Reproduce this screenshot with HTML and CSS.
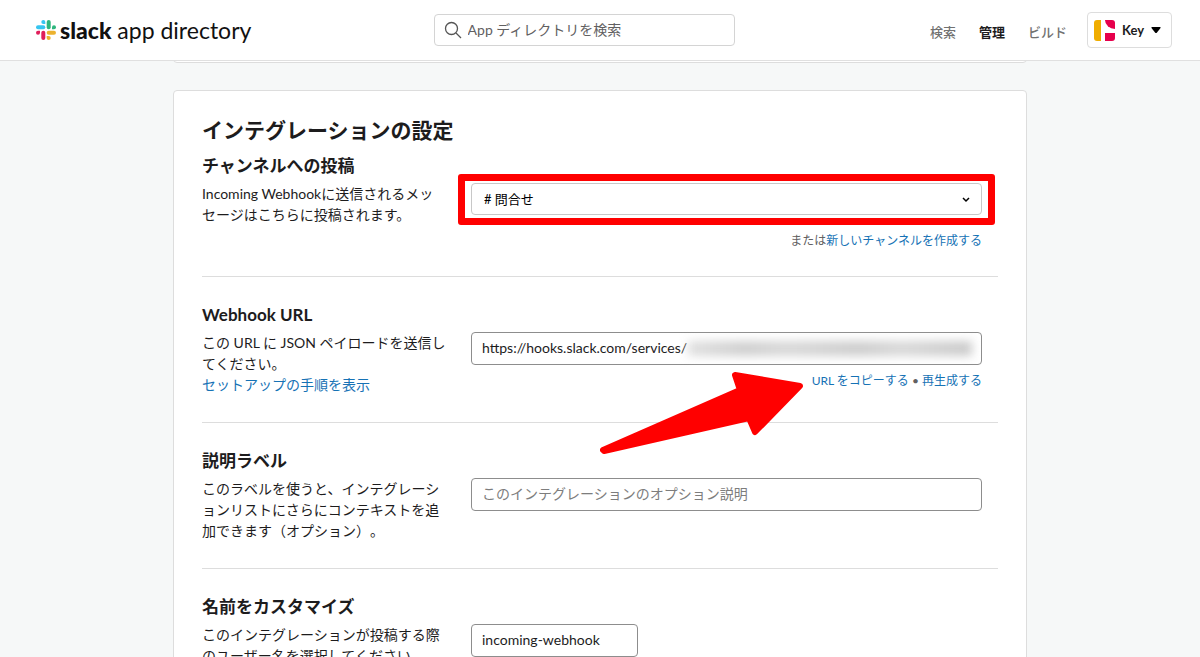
FILE: index.html
```html
<!DOCTYPE html>
<html lang="ja">
<head>
  <meta charset="UTF-8" />
  <meta name="viewport" content="width=device-width, initial-scale=1" />
  <title>Incoming Webhook | Slack App ディレクトリ</title>
  <link rel="stylesheet" href="styles.css">
</head>
<body>
  <header class="site-header">
    <a href="#" class="logo">
      <svg class="logo-mark" viewBox="0 0 20 20" aria-hidden="true">
        <g fill="#36c5f0">
          <path d="M7.3 0a2 2 0 0 0 0 4h2V2a2 2 0 0 0-2-2z" />
          <rect x="0" y="5.3" width="9.3" height="4" rx="2" />
        </g>
        <g fill="#2eb67d">
          <path d="M20 7.3a2 2 0 0 0-4 0v2h2a2 2 0 0 0 2-2z" />
          <rect x="10.7" y="0" width="4" height="9.3" rx="2" />
        </g>
        <g fill="#ecb22e">
          <path d="M12.7 20a2 2 0 0 0 0-4h-2v2a2 2 0 0 0 2 2z" />
          <rect x="10.7" y="10.7" width="9.3" height="4" rx="2" />
        </g>
        <g fill="#e01e5a">
          <path d="M0 12.7a2 2 0 0 0 4 0v-2H2a2 2 0 0 0-2 2z" />
          <rect x="5.3" y="10.7" width="4" height="9.3" rx="2" />
        </g>
      </svg>
      <span><strong>slack</strong> app directory</span>
    </a>

    <form class="search">
      <svg class="search-icon" viewBox="0 0 18 18" aria-hidden="true">
        <circle cx="7.5" cy="7.5" r="6" />
        <path d="M12 12l5 5" />
      </svg>
      <input type="text" aria-label="App ディレクトリを検索" placeholder="App ディレクトリを検索" />
    </form>

    <nav class="site-nav">
      <a href="#">検索</a>
      <a href="#" class="active">管理</a>
      <a href="#">ビルド</a>
      <button type="button" class="team-btn">
        <svg class="team-icon" viewBox="0 0 21 21" aria-hidden="true">
          <path fill="#f0ad00" d="M3 0h4v21H3a3 3 0 0 1-3-3V3a3 3 0 0 1 3-3z" />
          <path fill="#e6004c" d="M11 0h7a3 3 0 0 1 3 3v6a10 9 0 0 1-10-9z" />
          <path fill="#e6004c" d="M11 13h10v5a3 3 0 0 1-3 3h-7z" />
        </svg>
        Key
        <svg class="caret" viewBox="0 0 10 6" aria-hidden="true"><path d="M1 0h8q1 0 .5 1L6 5.5q-1 1-2 0L.5 1Q0 0 1 0z" /></svg>
      </button>
    </nav>
  </header>

  <main class="page">
    <div class="card card-previous"></div>

    <form class="card">
      <h1>インテグレーションの設定</h1>

      <section class="setting">
        <div class="setting-info">
          <h2><label for="channel">チャンネルへの投稿</label></h2>
          <p>Incoming Webhookに送信されるメッ<br>セージはこちらに投稿されます。</p>
        </div>
        <div class="setting-field">
          <div class="select-wrap">
            <select id="channel">
              <option># 問合せ</option>
            </select>
            <svg class="chevron" viewBox="0 0 8 6" aria-hidden="true"><path d="M1 1l3 3 3-3" /></svg>
            <div class="highlight"></div>
          </div>
          <p class="field-links">または<a href="#">新しいチャンネルを作成する</a></p>
        </div>
      </section>

      <section class="setting">
        <div class="setting-info">
          <h2><label for="url">Webhook URL</label></h2>
          <p>この URL に JSON ペイロードを送信してください。<br><a href="#">セットアップの手順を表示</a></p>
        </div>
        <div class="setting-field">
          <div class="url-wrap">
            <input type="text" id="url" value="https://hooks.slack.com/services/" readonly />
            <span class="secret" aria-hidden="true"></span>
          </div>
          <p class="field-links"><a href="#">URL をコピーする</a> • <a href="#">再生成する</a></p>
          <svg class="arrow" viewBox="0 0 206 86" aria-hidden="true">
            <path d="M3 80L140 20L135 5L200 16L155 62L149 48L4 81z" />
          </svg>
        </div>
      </section>

      <section class="setting">
        <div class="setting-info">
          <h2><label for="description">説明ラベル</label></h2>
          <p>このラベルを使うと、インテグレーションリストにさらにコンテキストを追加できます（オプション）。</p>
        </div>
        <div class="setting-field">
          <input type="text" id="description" placeholder="このインテグレーションのオプション説明" />
        </div>
      </section>

      <section class="setting">
        <div class="setting-info">
          <h2><label for="name">名前をカスタマイズ</label></h2>
          <p>このインテグレーションが投稿する際のユーザー名を選択してください。</p>
        </div>
        <div class="setting-field">
          <input type="text" id="name" class="short" value="incoming-webhook" />
        </div>
      </section>
    </form>
  </main>
</body>
</html>
```
FILE: styles.css
```css
* {
  margin: 0;
  padding: 0;
  box-sizing: border-box;
}
body {
  background-color: #f6f8f8;
  color: #1d1c1d;
  font-family: Lato, "Noto Sans CJK JP", sans-serif;
  font-size: 14px;
  line-height: 21px;
  text-spacing-trim: space-all;
}
a {
  color: #1672b5;
  text-decoration: none;
}
input, select, button {
  font-family: inherit;
  color: inherit;
}

/* header */
.site-header {
  position: sticky;
  top: 0;
  z-index: 10;
  display: grid;
  grid-template-columns: 35% 301px 1fr;
  align-items: center;
  height: 61px;
  padding: 0 28px 0 36px;
  background-color: white;
  border-bottom: 1px solid #e0e0e0;
}
.logo {
  display: flex;
  align-items: center;
  gap: 4px;
  color: #111;
  font-size: 23px;
  line-height: 28px;
}
.logo strong {
  font-weight: 900;
}
.logo-mark {
  width: 20px;
  height: 20px;
}
.search {
  display: flex;
  align-items: center;
  gap: 6px;
  height: 32px;
  padding: 0 9px;
  border: 1px solid #d4d4d4;
  border-radius: 4px;
}
.search-icon {
  width: 18px;
  height: 18px;
  fill: none;
  stroke: #555;
  stroke-width: 1.3;
}
.search input {
  flex: 1;
  min-width: 0;
  padding-bottom: 2px;
  border: none;
  outline: none;
  font-size: 14px;
}
.search input::placeholder {
  color: #616061;
}
.site-nav {
  display: flex;
  align-items: center;
  justify-content: flex-end;
  gap: 23px;
}
.site-nav a {
  padding-top: 5px;
  color: #717171;
  font-size: 13px;
  font-weight: 500;
}
.site-nav .active {
  color: #1d1c1d;
  font-weight: 700;
}
.team-btn {
  display: flex;
  align-items: center;
  gap: 7px;
  height: 36px;
  margin-left: -3px;
  padding: 0 10px 0 6px;
  background: none;
  border: 1px solid #ddd;
  border-radius: 4px;
  font-size: 13px;
  font-weight: 700;
  cursor: pointer;
}
.team-icon {
  width: 21px;
  height: 21px;
}
.caret {
  width: 10px;
  height: 6px;
}

/* settings card */
.page {
  max-width: 854px;
  margin: 0 auto;
}
.card {
  padding: 24px 28px;
  background-color: white;
  border: 1px solid #ddd;
  border-radius: 4px;
}
.card-previous {
  height: 12px;
  margin: -10px 0 27px;
  padding: 0;
}
h1 {
  font-size: 21px;
  line-height: 30px;
}
h2 {
  margin-bottom: 6px;
  font-size: 17px;
  line-height: 22px;
}
.setting {
  display: grid;
  grid-template-columns: 246px 1fr;
  gap: 23px;
  padding: 27px 0;
  border-bottom: 1px solid #ddd;
}
h1 + .setting {
  padding: 10px 0 25px;
}
.setting:last-child {
  border-bottom: none;
}
.setting-field {
  position: relative;
  padding: 28px 16px 0 0;
}
.setting-field input, .setting-field select {
  display: block;
  width: 100%;
  height: 33px;
  padding: 0 10px 2px;
  background-color: white;
  border: 1px solid #8d8d8d;
  border-radius: 4px;
  font-size: 14px;
}
.setting-field input::placeholder {
  color: #7d7d7d;
}
.setting-field .short {
  width: 167px;
}
.field-links {
  margin-top: 6px;
  color: #616061;
  font-size: 12px;
  line-height: 20px;
  text-align: right;
}

.select-wrap, .url-wrap {
  position: relative;
}
.setting-field select {
  height: 32px;
  padding: 0 12px;
  border-color: #c8c8c8;
  color: black;
  font-size: 13px;
  appearance: none;
}
.select-wrap + .field-links {
  margin-top: 16px;
}
.chevron {
  position: absolute;
  top: 14px;
  right: 12px;
  width: 8px;
  height: 6px;
  fill: none;
  stroke: black;
  stroke-width: 1.5;
  pointer-events: none;
}
.highlight {
  position: absolute;
  inset: -9px -13px -10px;
  border: 7px solid #ff0000;
  border-radius: 3px;
  pointer-events: none;
}
.secret {
  position: absolute;
  top: 9px;
  right: 10px;
  width: 284px;
  height: 15px;
  background: linear-gradient(90deg, #e0e0e0, #cfcfcf 20%, #d8d8d8 35%, #cdcdcd 60%, #d8d8d8 75%, #cacaca);
  filter: blur(5px);
}
.arrow {
  position: absolute;
  top: 66px;
  right: 192px;
  width: 206px;
  height: 86px;
  fill: #ff0000;
  stroke: #ff0000;
  stroke-width: 6;
  stroke-linejoin: round;
  pointer-events: none;
}
```
